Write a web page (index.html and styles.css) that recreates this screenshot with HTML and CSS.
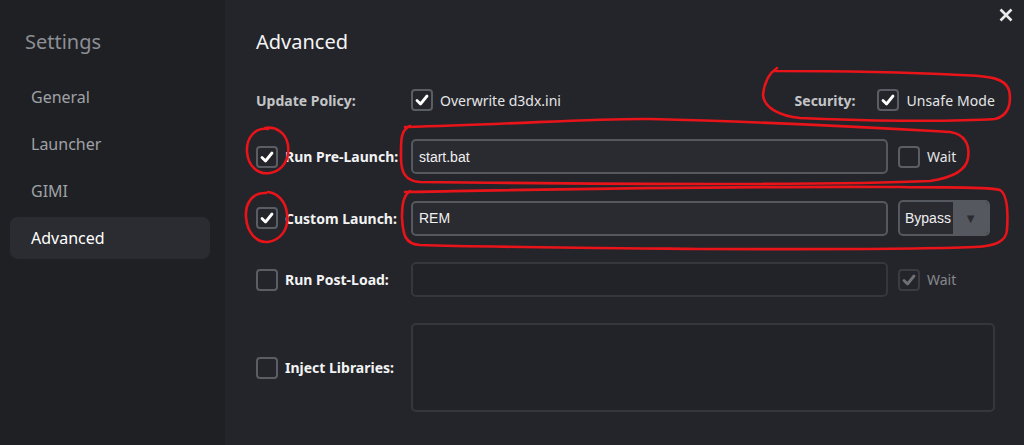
FILE: index.html
```html
<!DOCTYPE html>
<html>
<head>
<meta charset="utf-8">
<link rel="stylesheet" href="styles.css">
</head>
<body>
<div class="app">
  <aside class="sidebar">
    <div class="side-title">Settings</div>
    <nav class="nav">
      <div class="nav-item">General</div>
      <div class="nav-item">Launcher</div>
      <div class="nav-item">GIMI</div>
      <div class="nav-item active">Advanced</div>
    </nav>
  </aside>
  <main class="main">
    <h1 class="title">Advanced</h1>
    <div class="row-top">
      <div class="label dim col-label">Update Policy:</div>
      <label class="check-group">
        <span class="cb on"><svg viewBox="0 0 22 22"><path d="M6 11.5 L9.5 15 L16 7"/></svg></span>
        <span class="cb-text">Overwrite d3dx.ini</span>
      </label>
      <div class="security">
        <span class="label dim">Security:</span>
        <label class="check-group">
          <span class="cb on"><svg viewBox="0 0 22 22"><path d="M6 11.5 L9.5 15 L16 7"/></svg></span>
          <span class="cb-text">Unsafe Mode</span>
        </label>
      </div>
    </div>
    <div class="form">
      <div class="lab-cell">
        <span class="cb on"><svg viewBox="0 0 22 22"><path d="M6 11.5 L9.5 15 L16 7"/></svg></span>
        <span class="label">Run Pre-Launch:</span>
      </div>
      <div class="input">start.bat</div>
      <label class="check-group">
        <span class="cb"></span>
        <span class="cb-text">Wait</span>
      </label>

      <div class="lab-cell">
        <span class="cb on"><svg viewBox="0 0 22 22"><path d="M6 11.5 L9.5 15 L16 7"/></svg></span>
        <span class="label">Custom Launch:</span>
      </div>
      <div class="input">REM</div>
      <div class="select">
        <span class="select-val">Bypass</span>
        <span class="select-arrow">▼</span>
      </div>

      <div class="lab-cell">
        <span class="cb"></span>
        <span class="label">Run Post-Load:</span>
      </div>
      <div class="input disabled"></div>
      <label class="check-group disabled">
        <span class="cb on"><svg viewBox="0 0 22 22"><path d="M6 11.5 L9.5 15 L16 7"/></svg></span>
        <span class="cb-text">Wait</span>
      </label>

      <div class="lab-cell">
        <span class="cb"></span>
        <span class="label">Inject Libraries:</span>
      </div>
      <div class="textarea disabled"></div>
    </div>
  </main>
</div>
<svg class="close" viewBox="0 0 14 14"><path d="M1.5 1.5 L12.5 12.5 M12.5 1.5 L1.5 12.5"/></svg>
<svg class="marks" viewBox="0 0 1024 445">
  <path d="M777 68 C768 74 764 84 763 95 C764 108 780 116 800 118 C860 121 950 122 995 119 C1008 116 1012 104 1009 90 C1005 78 990 76 960 75 C900 72 830 71 775 71"/>
  <path d="M268 129 C255 127 246 138 247 152 C248 166 258 175 270 173 C282 171 290 160 288 145 C286 133 276 126 265 128"/>
  <path d="M266 193 C253 192 245 203 246 217 C247 232 256 243 268 242 C281 240 289 229 287 214 C286 202 278 193 268 192"/>
  <path d="M405 127 C520 124 600 118 650 119 C780 122 880 128 950 132 C965 134 970 145 968 158 C966 172 950 178 930 181 C820 186 600 184 420 182 C405 181 401 172 401 158 C401 142 400 130 410 126"/>
  <path d="M405 192 C520 190 700 186 900 187 C950 188 985 186 1000 190 C1008 195 1008 215 1007 230 C1006 242 995 246 975 247 C900 250 800 249 700 249 C600 248 480 247 420 245 C405 244 403 235 402 218 C402 205 403 196 410 191"/>
</svg>
</body>
</html>
```
FILE: styles.css
```css
* { box-sizing: border-box; }
html, body { margin: 0; padding: 0; }
body {
  width: 1024px;
  height: 445px;
  overflow: hidden;
  background: #24252a;
  font-family: "Noto Sans", "Open Sans", sans-serif;
  color: #e6e7e9;
  position: relative;
}
.app { display: flex; height: 445px; }
.sidebar {
  width: 225px;
  flex: none;
  background: #1f2024;
  padding-top: 28px;
}
.side-title {
  font-size: 20px;
  line-height: 28px;
  color: #8c8f94;
  padding-left: 25px;
}
.nav {
  margin-top: 20px;
  display: flex;
  flex-direction: column;
  gap: 5px;
}
.nav-item {
  height: 42px;
  margin: 0 15px 0 10px;
  padding-left: 21px;
  display: flex;
  align-items: center;
  font-size: 16px;
  color: #9fa2a7;
  border-radius: 8px;
}
.nav-item.active { background: #2b2c31; color: #ffffff; }
.main {
  flex: 1;
  padding: 28px 29px 0 31px;
}
.title {
  margin: 0;
  font-size: 20px;
  line-height: 28px;
  font-weight: 400;
  color: #f4f4f5;
}
.row-top {
  margin-top: 32px;
  height: 24px;
  display: flex;
  align-items: center;
}
.col-label { width: 155px; }
.label {
  font-weight: 700;
  font-size: 14px;
  color: #f2f3f4;
  white-space: nowrap;
}
.label.dim { color: #c3c5c8; }
.security { margin-left: auto; display: flex; align-items: center; gap: 22px; }
.check-group { display: flex; align-items: center; gap: 7px; }
.cb {
  width: 22px;
  height: 22px;
  flex: none;
  border: 2px solid #5a5d63;
  border-radius: 4px;
  display: flex;
  align-items: center;
  justify-content: center;
}
.cb svg { width: 22px; height: 22px; flex: none; margin: -2px; }
.cb svg path { fill: none; stroke: #ffffff; stroke-width: 2.8; stroke-linecap: round; stroke-linejoin: round; }
.cb-text { font-size: 14px; color: #e4e5e7; }
.security .cb-text { letter-spacing: 0.1px; }
.check-group.disabled .cb { border-color: #3a3c41; }
.check-group.disabled .cb svg path { stroke: #6e7075; }
.check-group.disabled .cb-text { color: #85888d; }
.form {
  margin-top: 27px;
  display: grid;
  grid-template-columns: 145px 477px 97px;
  column-gap: 10px;
  row-gap: 26px;
  align-items: center;
}
.lab-cell { display: flex; align-items: center; gap: 7px; }
.input {
  height: 35px;
  border: 2px solid #55585e;
  border-radius: 5px;
  background: #2a2b30;
  font-family: "Liberation Sans", Arial, sans-serif;
  font-size: 14px;
  color: #f0f0f0;
  padding-left: 6px;
  display: flex;
  align-items: center;
}
.input.disabled { border-color: #35373c; background: #222328; }
.textarea {
  grid-column: 2 / 4;
  height: 89px;
  border: 2px solid #35373c;
  border-radius: 5px;
  background: #222328;
}
.select {
  height: 36px;
  width: 92px;
  border: 2px solid #55585e;
  border-radius: 5px;
  background: #2a2b30;
  display: flex;
  overflow: hidden;
}
.select-val {
  flex: 1;
  font-family: "Liberation Sans", Arial, sans-serif;
  font-size: 14px;
  color: #f0f0f0;
  padding-left: 5px;
  display: flex;
  align-items: center;
}
.select-arrow {
  width: 35px;
  background: #55585e;
  color: #2b2c31;
  font-size: 10px;
  display: flex;
  align-items: center;
  justify-content: center;
  font-family: "DejaVu Sans", sans-serif;
}
.close {
  position: absolute;
  top: 8px;
  left: 999px;
  width: 14px;
  height: 14px;
}
.close path { stroke: #e9e9ea; stroke-width: 2.6; fill: none; }
.marks {
  position: absolute;
  left: 0;
  top: 0;
  width: 1024px;
  height: 445px;
  pointer-events: none;
}
.marks path { fill: none; stroke: #e8141a; stroke-width: 2.6; stroke-linecap: round; }
```
